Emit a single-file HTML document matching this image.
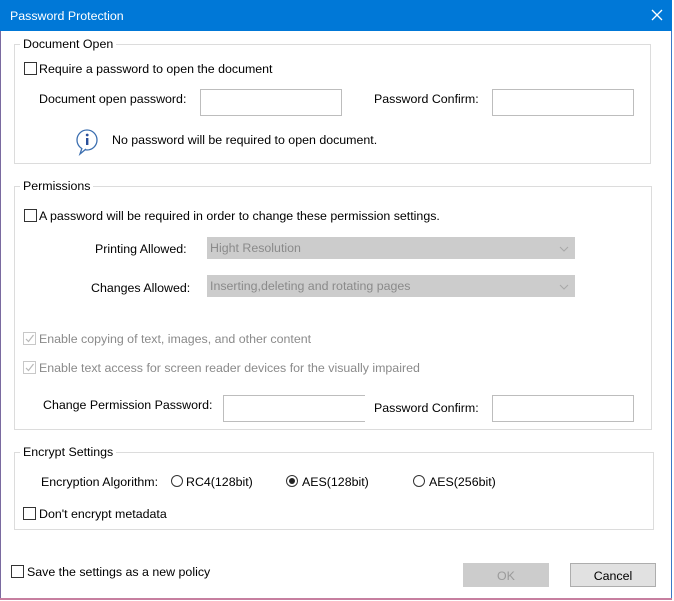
<!DOCTYPE html>
<html><head><style>
*{margin:0;padding:0;box-sizing:border-box}
body{width:674px;height:601px;background:#fff;position:relative;overflow:hidden;font-family:"Liberation Sans",Arial,sans-serif;font-size:12.4px;color:#000}
.a{position:absolute;white-space:nowrap;line-height:14px}
.win{position:absolute;left:0;top:0;width:672px;height:600px;background:#fff}
.title{position:absolute;left:0;top:0;width:672px;height:31px;background:#0078d7;color:#fff}
.grp{position:absolute;border:1px solid #dcdcdc}
.leg{position:absolute;background:#fff;padding:0 3px;line-height:14px}
.cb{position:absolute;width:13px;height:13px;border:1px solid #333;background:#fff}
.cbd{position:absolute;width:13px;height:13px;border:1px solid #c8c8c8;background:#fff}
.inp{position:absolute;border:1px solid #bdbdbd;background:#fff}
.sel{position:absolute;background:#cccccc;color:#8a8a8a;height:22px;line-height:22px;padding-left:3px}
.rad{position:absolute;width:12px;height:12px;border:1px solid #333;border-radius:50%;background:#fff}
.btn{position:absolute;height:24px;line-height:24px;text-align:center;background:#e1e1e1;border:1px solid #adadad}
</style></head><body>
<div class="win">
<div class="title"><span class="a" style="left:10px;top:9px">Password Protection</span>
<svg style="position:absolute;left:651px;top:9px" width="12" height="12"><path d="M1 1L11 11M11 1L1 11" stroke="#fff" stroke-width="1.3"/></svg></div>

<div class="grp" style="left:14px;top:44px;width:637px;height:120px"></div>
<span class="leg" style="left:20px;top:37px">Document Open</span>
<div class="cb" style="left:24px;top:62px"></div>
<span class="a" style="left:39px;top:62px">Require a password to open the document</span>
<span class="a" style="left:39px;top:92px">Document open password:</span>
<div class="inp" style="left:200px;top:89px;width:142px;height:27px"></div>
<span class="a" style="left:374px;top:92px">Password Confirm:</span>
<div class="inp" style="left:492px;top:89px;width:142px;height:27px"></div>
<svg style="position:absolute;left:74px;top:128px" width="26" height="28"><circle cx="13" cy="12" r="10" fill="#fff" stroke="#3c6fb0" stroke-width="1.3"/><path d="M8 20L6 26L12 21" fill="#fff" stroke="#3c6fb0" stroke-width="1.3"/><rect x="12" y="10" width="2.4" height="7" fill="#2a4f9a"/><circle cx="13.2" cy="7" r="1.4" fill="#2a4f9a"/></svg>
<span class="a" style="left:112px;top:133px">No password will be required to open document.</span>

<div class="grp" style="left:14px;top:186px;width:638px;height:244px"></div>
<span class="leg" style="left:20px;top:179px">Permissions</span>
<div class="cb" style="left:24px;top:209px"></div>
<span class="a" style="left:39px;top:209px">A password will be required in order to change these permission settings.</span>
<span class="a" style="left:95px;top:242px">Printing Allowed:</span>
<div class="sel" style="left:207px;top:237px;width:368px">Hight Resolution<svg style="position:absolute;right:6px;top:9px" width="10" height="6"><path d="M1 1L5 5L9 1" stroke="#a8a8a8" fill="none"/></svg></div>
<span class="a" style="left:91px;top:281px">Changes Allowed:</span>
<div class="sel" style="left:207px;top:275px;width:368px">Inserting,deleting and rotating pages<svg style="position:absolute;right:6px;top:9px" width="10" height="6"><path d="M1 1L5 5L9 1" stroke="#a8a8a8" fill="none"/></svg></div>
<div class="cbd" style="left:23px;top:332px"><svg width="11" height="11" style="position:absolute;left:0;top:0"><path d="M2 6L4.5 8.5L9.5 2" stroke="#b8b8b8" fill="none" stroke-width="1.2"/></svg></div>
<span class="a" style="left:39px;top:332px;color:#8a8a8a">Enable copying of text, images, and other content</span>
<div class="cbd" style="left:23px;top:361px"><svg width="11" height="11" style="position:absolute;left:0;top:0"><path d="M2 6L4.5 8.5L9.5 2" stroke="#b8b8b8" fill="none" stroke-width="1.2"/></svg></div>
<span class="a" style="left:39px;top:361px;color:#8a8a8a">Enable text access for screen reader devices for the visually impaired</span>
<span class="a" style="left:43px;top:398px">Change Permission Password:</span>
<div class="inp" style="left:223px;top:395px;width:142px;height:27px;border-right:none"></div>
<span class="a" style="left:374px;top:401px">Password Confirm:</span>
<div class="inp" style="left:492px;top:395px;width:142px;height:27px"></div>

<div class="grp" style="left:14px;top:452px;width:640px;height:78px"></div>
<span class="leg" style="left:20px;top:445px">Encrypt Settings</span>
<span class="a" style="left:41px;top:475px">Encryption Algorithm:</span>
<div class="rad" style="left:171px;top:475px"></div>
<span class="a" style="left:186px;top:475px">RC4(128bit)</span>
<div class="rad" style="left:286px;top:475px"><div style="position:absolute;left:2px;top:2px;width:6px;height:6px;border-radius:50%;background:#222"></div></div>
<span class="a" style="left:302px;top:475px">AES(128bit)</span>
<div class="rad" style="left:413px;top:475px"></div>
<span class="a" style="left:429px;top:475px">AES(256bit)</span>
<div class="cb" style="left:23px;top:507px"></div>
<span class="a" style="left:39px;top:507px">Don't encrypt metadata</span>

<div class="cb" style="left:11px;top:565px"></div>
<span class="a" style="left:27px;top:565px">Save the settings as a new policy</span>
<div class="btn" style="left:463px;top:563px;width:86px;color:#9a9a9a;background:#cccccc;border-color:#cccccc">OK</div>
<div class="btn" style="left:570px;top:563px;width:86px">Cancel</div>
</div>
<div style="position:absolute;left:0;top:31px;width:1px;height:569px;background:#7a6aa0"></div>
<div style="position:absolute;left:671px;top:31px;width:1px;height:569px;background:#3b78c8"></div>
<div style="position:absolute;left:0;top:598px;width:672px;height:2px;background:#c77fa0"></div>
</body></html>
